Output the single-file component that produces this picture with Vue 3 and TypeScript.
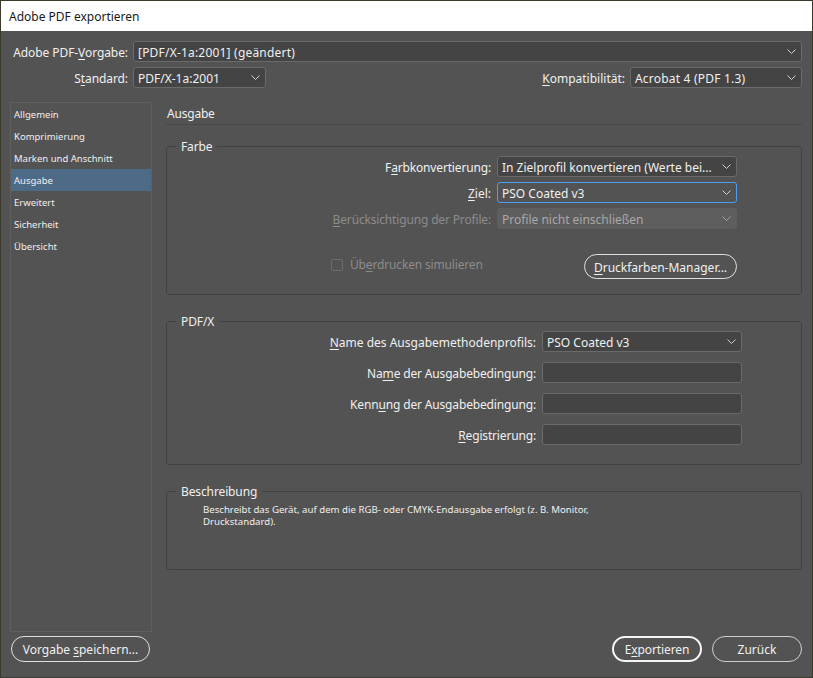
<script setup lang="ts">
const navItems: string[] = ['Allgemein', 'Komprimierung', 'Marken und Anschnitt', 'Ausgabe', 'Erweitert', 'Sicherheit', 'Übersicht']
const activeItem = 'Ausgabe'
</script>

<template>
  <div class="window">
    <header class="titlebar">Adobe PDF exportieren</header>
    <div class="body">
      <div class="top-row">
        <label class="top-label"><span>Adobe PDF-<u>V</u>orgabe:</span></label>
        <div class="select grow">
          <span class="value wide">[PDF/X-1a:2001] (geändert)</span>
          <svg class="chev" viewBox="0 0 9 5"><path d="M.5.5l4 4 4-4" /></svg>
        </div>
      </div>
      <div class="top-row second">
        <label class="top-label">S<u>t</u>andard:</label>
        <div class="select standard">
          <span class="value">PDF/X-1a:2001</span>
          <svg class="chev" viewBox="0 0 9 5"><path d="M.5.5l4 4 4-4" /></svg>
        </div>
        <div class="spacer"></div>
        <label class="compat-label"><u>K</u>ompatibilität:</label>
        <div class="select compat">
          <span class="value wide">Acrobat 4 (PDF 1.3)</span>
          <svg class="chev" viewBox="0 0 9 5"><path d="M.5.5l4 4 4-4" /></svg>
        </div>
      </div>

      <div class="columns">
        <nav class="sidebar">
          <div v-for="item in navItems" :key="item" class="nav-item" :class="{ active: item === activeItem }">{{ item }}</div>
        </nav>
        <main class="main">
          <h2 class="heading">Ausgabe</h2>

          <section class="group farbe">
            <span class="legend">Farbe</span>
            <div class="form-row">
              <label class="row-label tight">F<u>a</u>rbkonvertierung:</label>
              <div class="select farb-select">
                <span class="value">In Zielprofil konvertieren (Werte bei...</span>
                <svg class="chev" viewBox="0 0 9 5"><path d="M.5.5l4 4 4-4" /></svg>
              </div>
            </div>
            <div class="form-row">
              <label class="row-label"><u>Z</u>iel:</label>
              <div class="select farb-select focused">
                <span class="value">PSO Coated v3</span>
                <svg class="chev" viewBox="0 0 9 5"><path d="M.5.5l4 4 4-4" /></svg>
              </div>
            </div>
            <div class="form-row">
              <label class="row-label tight disabled-text"><u>B</u>erücksichtigung der Profile:</label>
              <div class="select farb-select disabled">
                <span class="value">Profile nicht einschließen</span>
                <svg class="chev" viewBox="0 0 9 5"><path d="M.5.5l4 4 4-4" /></svg>
              </div>
            </div>
            <div class="check-row">
              <span class="checkbox"></span>
              <span class="check-label tight disabled-text">Üb<u>e</u>rdrucken simulieren</span>
              <div class="spacer"></div>
              <button class="btn inks"><u>D</u>ruckfarben-Manager...</button>
            </div>
          </section>

          <section class="group pdfx">
            <span class="legend">PDF/X</span>
            <div class="form-row">
              <label class="row-label"><u>N</u>ame des Ausgabemethodenprofils:</label>
              <div class="select x-field">
                <span class="value">PSO Coated v3</span>
                <svg class="chev" viewBox="0 0 9 5"><path d="M.5.5l4 4 4-4" /></svg>
              </div>
            </div>
            <div class="form-row">
              <label class="row-label tight">Na<u>m</u>e der Ausgabebedingung:</label>
              <div class="input x-field"></div>
            </div>
            <div class="form-row">
              <label class="row-label tight">Kenn<u>u</u>ng der Ausgabebedingung:</label>
              <div class="input x-field"></div>
            </div>
            <div class="form-row">
              <label class="row-label tight"><u>R</u>egistrierung:</label>
              <div class="input x-field"></div>
            </div>
          </section>

          <section class="group desc">
            <span class="legend">Beschreibung</span>
            <p class="desc-text">Beschreibt das Gerät, auf dem die RGB- oder CMYK-Endausgabe erfolgt (z. B. Monitor, Druckstandard).</p>
          </section>
        </main>
      </div>

      <footer class="footer">
        <button class="btn save">Vorgabe <u>s</u>peichern...</button>
        <div class="spacer"></div>
        <button class="btn primary">E<u>x</u>portieren</button>
        <button class="btn back">Zurück</button>
      </footer>
    </div>
  </div>
</template>

<style>
html, body { margin: 0; background: #2f3324; }
</style>

<style scoped>
.window {
  box-sizing: border-box;
  width: 813px;
  height: 678px;
  padding: 1px 1px 1px 1px;
  display: flex;
  flex-direction: column;
  overflow: hidden;
  font-family: "Noto Sans", "Open Sans", sans-serif;
  font-size: 12px;
  color: #f0f0f0;
  background: #3a3a2c;
}
u { text-underline-offset: 2px; text-decoration-thickness: 1px; }
.titlebar {
  height: 30px;
  flex: none;
  background: #fff;
  color: #1a1a1a;
  padding-left: 8px;
  line-height: 31px;
}
.body {
  flex: 1;
  background: #535353;
  padding: 10px 10px 0 9px;
  display: flex;
  flex-direction: column;
  min-height: 0;
}
.top-row { display: flex; align-items: center; height: 21px; }
.second { margin-top: 5px; }
.top-label { width: 118px; text-align: right; margin-right: 5px; white-space: nowrap; padding-top: 2px; letter-spacing: -0.08px; }
.compat-label { margin-right: 5px; white-space: nowrap; padding-top: 2px; }
.grow { flex: 1; }
.spacer { flex: 1; }
.select {
  box-sizing: border-box;
  height: 21px;
  display: flex;
  align-items: center;
  justify-content: space-between;
  background: #444;
  border: 1px solid #6a6a6a;
  border-radius: 3px;
  padding: 0 5px 0 4px;
  white-space: nowrap;
}
.value { padding-top: 2px; }
.wide { letter-spacing: 0.2px; }
.tight { letter-spacing: -0.16px; }
.standard { width: 133px; }
.compat { width: 172px; }
.chev { width: 9px; height: 5px; flex: none; overflow: visible; }
.chev path { fill: none; stroke: #d0d0d0; stroke-width: 1; }
.columns { flex: 1; display: flex; margin-top: 14px; min-height: 0; }
.sidebar {
  box-sizing: border-box;
  width: 142px;
  height: 530px;
  border: 1px solid #5f5f5f;
  flex: none;
}
.nav-item {
  height: 22px;
  line-height: 23px;
  padding-left: 3px;
  font-size: 9.5px;
}
.nav-item.active { background: #4d6a87; }
.main { flex: 1; margin-left: 14px; min-width: 0; }
.heading {
  margin: 0;
  font-size: 12px;
  font-weight: 400;
  height: 23px;
  line-height: 24px;
  padding-left: 1px;
  letter-spacing: -0.2px;
  border-bottom: 1px solid #484848;
  box-sizing: border-box;
}
.group {
  position: relative;
  box-sizing: border-box;
  border: 1px solid #424242;
  border-radius: 3px;
}
.legend {
  position: absolute;
  left: 9px;
  top: -8px;
  height: 16px;
  line-height: 16px;
  padding: 0 5px;
  background: #535353;
  letter-spacing: -0.12px;
}
.farbe { height: 149px; margin-top: 21px; padding-top: 9px; }
.pdfx { height: 144px; margin-top: 26px; padding-top: 9px; }
.desc { height: 79px; margin-top: 26px; }
.form-row {
  display: flex;
  align-items: center;
  justify-content: flex-end;
  height: 21px;
  margin-bottom: 5px;
}
.farbe .form-row { padding-right: 64px; }
.pdfx .form-row { padding-right: 59px; margin-bottom: 10px; }
.row-label { margin-right: 6px; white-space: nowrap; padding-top: 2px; }
.farb-select { width: 240px; }
.x-field { width: 200px; }
.input {
  box-sizing: border-box;
  height: 21px;
  background: #444;
  border: 1px solid #6a6a6a;
  border-radius: 3px;
}
.focused { background: #535353; border-color: #4a9ff0; }
.disabled { background: #5e5e5e; border-color: #5e5e5e; color: #a8a8a8; }
.disabled .chev path { stroke: #a0a0a0; }
.disabled-text { color: #8c8c8c; }
.check-row { display: flex; align-items: flex-start; height: 25px; margin-top: 25px; padding: 0 64px 0 164px; }
.checkbox {
  box-sizing: border-box;
  width: 12px;
  height: 12px;
  border: 1px solid #6c6c6c;
  border-radius: 2px;
  margin: 5px 7px 0 0;
}
.check-label { line-height: 22px; }
.btn {
  box-sizing: border-box;
  height: 26px;
  font: inherit;
  color: #f0f0f0;
  background: transparent;
  border: 1px solid #e0e0e0;
  border-radius: 13px;
  padding: 2px 0 0;
  white-space: nowrap;
}
.inks { width: 153px; height: 25px; }
.desc-text {
  margin: 0;
  padding: 12px 0 0 36px;
  width: 440px;
  font-size: 9.65px;
  line-height: 12px;
  box-sizing: content-box;
}
.footer { display: flex; align-items: center; height: 26px; margin-bottom: 15px; padding: 0 0 0 1px; flex: none; }
.footer .btn { padding-top: 0; }
.save { width: 139px; }
.primary { width: 90px; border-width: 2px; border-color: #f5f5f5; letter-spacing: -0.1px; }
.back { width: 90px; margin-left: 10px; border-color: #cfcfcf; }
</style>
